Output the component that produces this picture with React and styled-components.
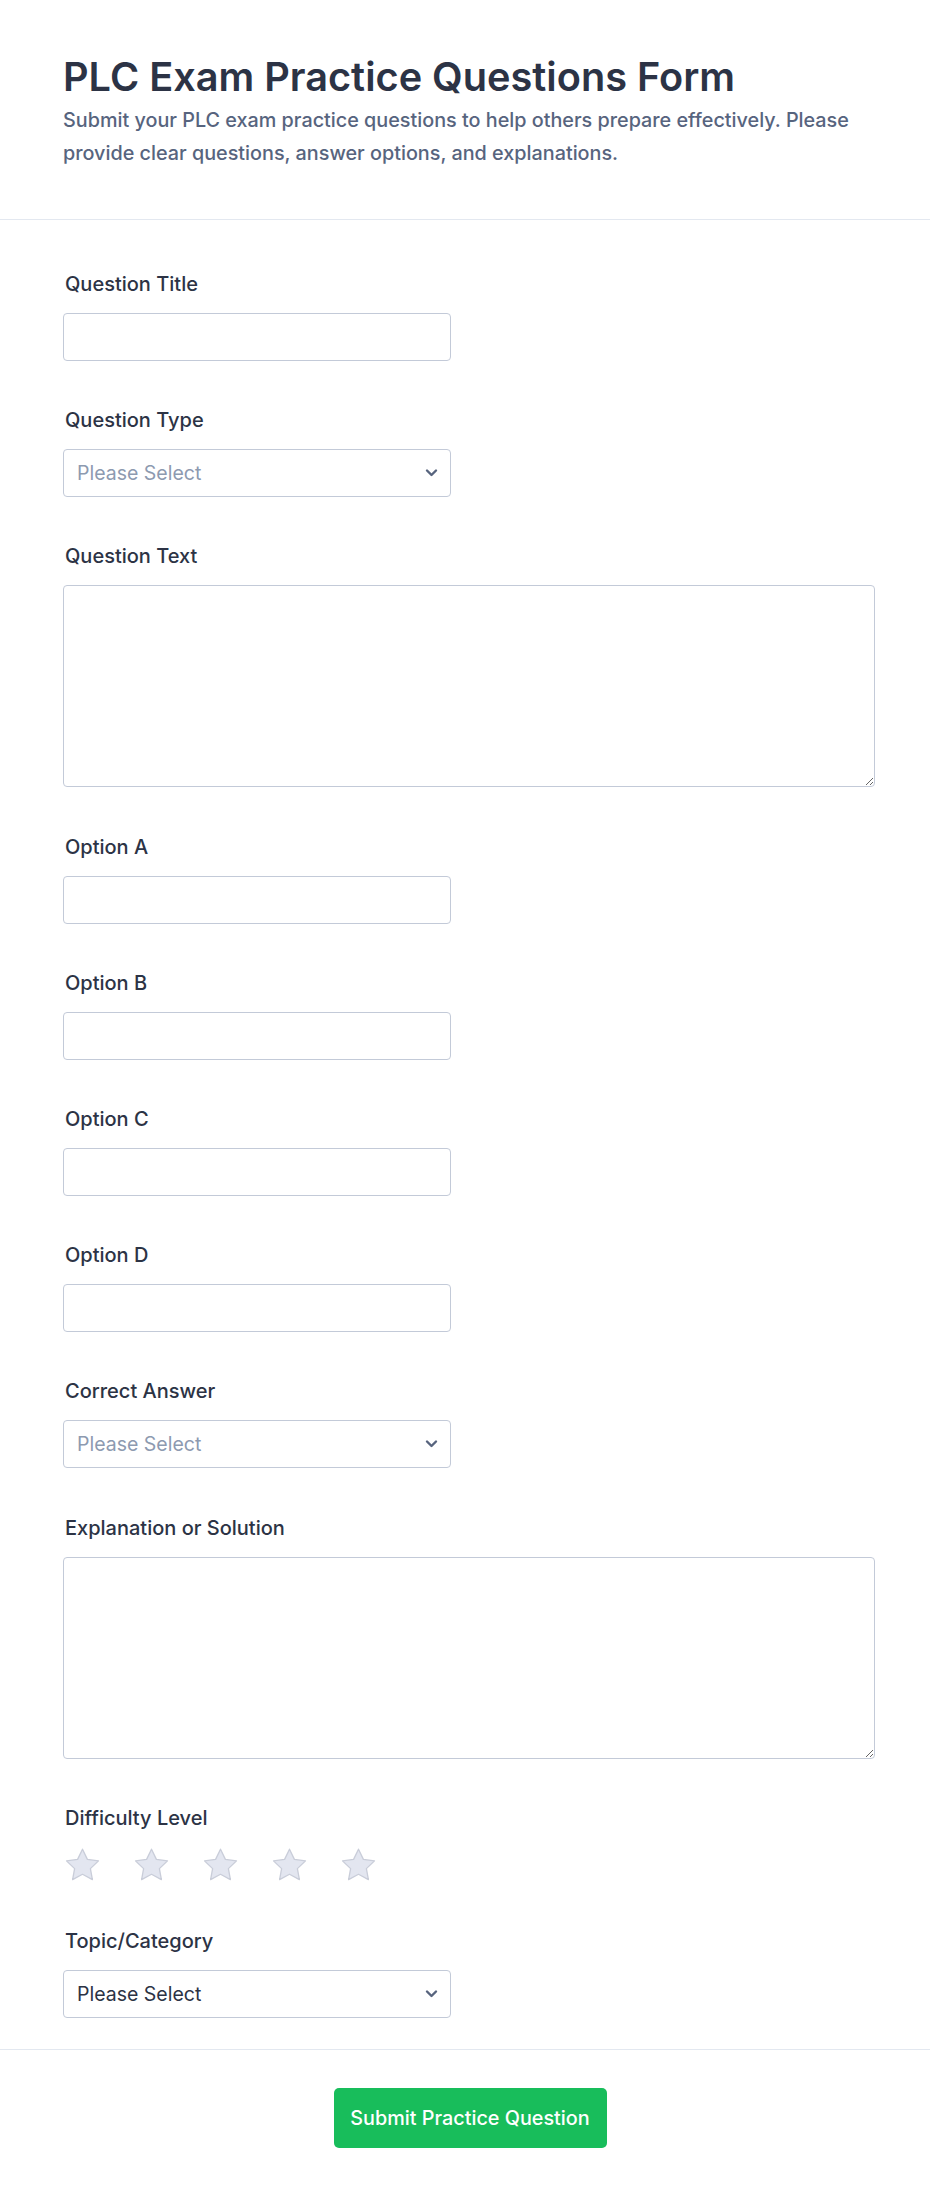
import React from 'react';
import styled, { createGlobalStyle } from 'styled-components';

const GlobalStyle = createGlobalStyle`
  body {
    margin: 0;
    background: #ffffff;
    font-family: Inter, "Noto Sans", sans-serif;
  }
  * { box-sizing: border-box; }
`;

const Page = styled.div`
  width: 930px;
  background: #fff;
`;

const Header = styled.header`
  padding: 53px 63px 49px;
  border-bottom: 1px solid #e3e8f0;
`;

const Title = styled.h1`
  margin: 0;
  font: 600 39.7px/48px Inter, sans-serif;
  color: #2c3345;
`;

const Subtitle = styled.p`
  margin: 3px 0 0;
  font: 500 19.8px/33px Inter, sans-serif;
  color: #57647e;
`;

const FormBody = styled.div`
  padding: 52px 63px 31px;
  display: flex;
  flex-direction: column;
  gap: 47.2px;
  border-bottom: 1px solid #e3e8f0;
`;

const Field = styled.div`
  display: flex;
  flex-direction: column;
  gap: 17px;
`;

const Label = styled.label`
  padding-left: 2px;
  font: 500 20px/24px Inter, sans-serif;
  color: #2c3345;
`;

const TextInput = styled.input`
  width: 388px;
  height: 48px;
  border: 1px solid #c3cad8;
  border-radius: 4px;
  background: #fff;
  padding: 0 13px;
  font: 400 19.5px Inter, sans-serif;
  color: #2c3345;
  outline: none;
`;

const TextArea = styled.textarea`
  width: 812px;
  height: 202px;
  border: 1px solid #c3cad8;
  border-radius: 4px;
  background: #fff;
  padding: 10px 13px;
  font: 400 19.5px Inter, sans-serif;
  color: #2c3345;
  outline: none;
  resize: vertical;
`;

const SelectWrap = styled.div`
  position: relative;
  width: 388px;
  height: 48px;
`;

const Select = styled.select`
  width: 100%;
  height: 100%;
  appearance: none;
  border: 1px solid #c3cad8;
  border-radius: 4px;
  background: #fff;
  padding: 0 40px 0 13px;
  font: 400 19.5px Inter, sans-serif;
  color: ${({ filled }) => (filled ? '#2c3345' : '#8d9ab0')};
  outline: none;
`;

const Chevron = styled.svg`
  position: absolute;
  right: 13px;
  top: 50%;
  width: 13px;
  height: 9px;
  transform: translateY(-50%);
  pointer-events: none;
`;

const Stars = styled.div`
  display: flex;
  gap: 32px;
  height: 35px;
  padding-left: 1px;
`;

const Star = styled.svg`
  width: 37px;
  height: 35px;
`;

const Footer = styled.div`
  padding: 38px 0 49px 10px;
  display: flex;
  justify-content: center;
`;

const SubmitButton = styled.button`
  width: 273px;
  height: 60px;
  border: none;
  border-radius: 5px;
  background: #18bd5b;
  color: #fff;
  font: 500 19.8px Inter, sans-serif;
  cursor: pointer;
`;

const ChevronIcon = () => (
  <Chevron viewBox="0 0 13 9">
    <path d="M2 2l4.5 4.5L11 2" fill="none" stroke="#57647e" strokeWidth="2.4" strokeLinecap="round" strokeLinejoin="round" />
  </Chevron>
);

const DropDown = ({ filled }) => (
  <SelectWrap>
    <Select filled={filled ? 1 : 0} defaultValue="">
      <option value="">Please Select</option>
    </Select>
    <ChevronIcon />
  </SelectWrap>
);

const StarIcon = () => (
  <Star viewBox="0 0 37 35">
    <path
      d="M18.5 2.2l4.9 10.2 11.1 1.5-8.1 7.7 2 11-9.9-5.3-9.9 5.3 2-11-8.1-7.7 11.1-1.5z"
      fill="#e3e6f0"
      stroke="#c9cdd9"
      strokeWidth="1.3"
      strokeLinejoin="round"
    />
  </Star>
);

const App = () => (
  <Page>
    <GlobalStyle />
    <Header>
      <Title>PLC Exam Practice Questions Form</Title>
      <Subtitle>
        Submit your PLC exam practice questions to help others prepare effectively. Please provide clear
        questions, answer options, and explanations.
      </Subtitle>
    </Header>
    <FormBody>
      <Field>
        <Label>Question Title</Label>
        <TextInput type="text" />
      </Field>
      <Field>
        <Label>Question Type</Label>
        <DropDown />
      </Field>
      <Field>
        <Label>Question Text</Label>
        <TextArea />
      </Field>
      <Field>
        <Label>Option A</Label>
        <TextInput type="text" />
      </Field>
      <Field>
        <Label>Option B</Label>
        <TextInput type="text" />
      </Field>
      <Field>
        <Label>Option C</Label>
        <TextInput type="text" />
      </Field>
      <Field>
        <Label>Option D</Label>
        <TextInput type="text" />
      </Field>
      <Field>
        <Label>Correct Answer</Label>
        <DropDown />
      </Field>
      <Field>
        <Label>Explanation or Solution</Label>
        <TextArea />
      </Field>
      <Field>
        <Label>Difficulty Level</Label>
        <Stars>
          {[1, 2, 3, 4, 5].map((n) => (
            <StarIcon key={n} />
          ))}
        </Stars>
      </Field>
      <Field>
        <Label>Topic/Category</Label>
        <DropDown filled />
      </Field>
    </FormBody>
    <Footer>
      <SubmitButton>Submit Practice Question</SubmitButton>
    </Footer>
  </Page>
);

export default App;
